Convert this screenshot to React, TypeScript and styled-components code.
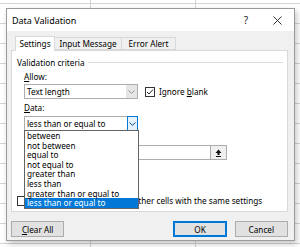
import React from "react";
import styled, { createGlobalStyle } from "styled-components";

const Global = createGlobalStyle`
  html, body { margin: 0; padding: 0; }
  body { width: 300px; height: 247px; overflow: hidden; }
`;

const FONT = `"Noto Sans", "Open Sans", sans-serif`;

const Desktop = styled.div`
  width: 300px;
  height: 247px;
  box-sizing: border-box;
  padding: 8px 0 0 6px;
  background-color: #ffffff;
  background-image:
    linear-gradient(to right, #d4d4d4 1px, transparent 1px),
    linear-gradient(to bottom, #d4d4d4 1px, transparent 1px);
  background-size: 105px 100%, 100% 20px;
  background-position: 90px 0, 0 3px;
  font-family: ${FONT};
  font-size: 8.2px;
  color: #000;
`;

const Dialog = styled.div`
  width: 289px;
  height: 233px;
  box-sizing: border-box;
  border: 1px solid #9a9a9a;
  background: #f0f0f0;
  display: flex;
  flex-direction: column;
  box-shadow: 2px 3px 6px rgba(0, 0, 0, 0.22);
`;

const TitleBar = styled.div`
  height: 22px;
  background: #ffffff;
  display: flex;
  align-items: center;
  padding-left: 5px;
  flex: none;
`;

const Title = styled.div`
  font-size: 9px;
  flex: 1;
  padding-top: 1px;
`;

const TitleButton = styled.div<{ $w: number }>`
  width: ${(p) => p.$w}px;
  height: 22px;
  display: flex;
  align-items: center;
  justify-content: center;
  font-size: 10px;
  color: #222;
`;

const Body = styled.div`
  flex: 1;
  display: flex;
  flex-direction: column;
  padding: 5px 6px 0 4px;
`;

const TabRow = styled.div`
  display: flex;
  height: 14px;
  padding-left: 4px;
  align-items: flex-end;
  position: relative;
  z-index: 1;
`;

const Tab = styled.div<{ $active?: boolean; $w: number }>`
  width: ${(p) => p.$w}px;
  box-sizing: border-box;
  height: ${(p) => (p.$active ? 15 : 13)}px;
  margin-bottom: ${(p) => (p.$active ? -1 : 0)}px;
  border: 1px solid #d9d9d9;
  border-bottom: ${(p) => (p.$active ? "none" : "1px solid #d9d9d9")};
  background: ${(p) => (p.$active ? "#ffffff" : "#f0f0f0")};
  margin-left: ${(p) => (p.$active ? 0 : -1)}px;
  display: flex;
  align-items: center;
  justify-content: center;
  padding-bottom: ${(p) => (p.$active ? 1 : 0)}px;
`;

const Panel = styled.div`
  height: 162px;
  box-sizing: border-box;
  border: 1px solid #d9d9d9;
  background: #ffffff;
  position: relative;
  padding: 4px 0 0 5px;
  display: flex;
  flex-direction: column;
`;

const GroupHeader = styled.div`
  display: flex;
  align-items: center;
  height: 15px;
  padding-right: 4px;
  gap: 3px;
`;

const GroupLine = styled.div`
  flex: 1;
  height: 1px;
  background: #dcdcdc;
`;

const Label = styled.div<{ $top: number }>`
  margin-top: ${(p) => p.$top}px;
  padding-left: 7px;
  height: 11px;
  line-height: 11px;
`;

const FieldRow = styled.div<{ $top: number }>`
  display: flex;
  align-items: center;
  margin-top: ${(p) => p.$top}px;
  padding-left: 7px;
  gap: 7px;
`;

const Combo = styled.div`
  width: 114px;
  height: 15px;
  box-sizing: border-box;
  border: 1px solid #adadad;
  background: #fff;
  display: flex;
  align-items: center;
`;

const ComboText = styled.div`
  flex: 1;
  padding-left: 2px;
  white-space: nowrap;
`;

const ComboButton = styled.div<{ $hot?: boolean }>`
  width: 11px;
  height: ${(p) => (p.$hot ? 15 : 13)}px;
  box-sizing: border-box;
  margin-right: ${(p) => (p.$hot ? -1 : 0)}px;
  border: 1px solid ${(p) => (p.$hot ? "#0078d7" : "#e6e6e6")};
  background: ${(p) => (p.$hot ? "#e5f1fb" : "#e6e6e6")};
  display: flex;
  align-items: center;
  justify-content: center;
`;

const CheckLabel = styled.div`
  display: flex;
  align-items: center;
  gap: 4px;
  white-space: nowrap;
`;

const Box = styled.div`
  width: 10px;
  height: 10px;
  box-sizing: border-box;
  border: 1px solid #333;
  background: #fff;
  display: flex;
  align-items: center;
  justify-content: center;
  flex: none;
`;

const InputRow = styled.div`
  display: flex;
  margin-top: 14px;
  margin-left: 7px;
  width: 203px;
  height: 15px;
  box-sizing: border-box;
  border: 1px solid #adadad;
  background: #fff;
`;

const InputArea = styled.div`
  flex: 1;
`;

const RangeButton = styled.div`
  width: 15px;
  border-left: 1px solid #adadad;
  background: #f0f0f0;
  display: flex;
  align-items: center;
  justify-content: center;
`;

const ApplyRow = styled.div`
  display: flex;
  align-items: center;
  gap: 4px;
  margin-top: 35px;
  white-space: nowrap;
`;

const DropList = styled.div`
  position: absolute;
  left: 12px;
  top: 79px;
  width: 115px;
  box-sizing: border-box;
  border: 1px solid #646464;
  background: #fff;
  z-index: 2;
`;

const Item = styled.div<{ $sel?: boolean }>`
  height: 9.6px;
  line-height: 9.6px;
  padding-left: 2px;
  white-space: nowrap;
  background: ${(p) => (p.$sel ? "#0078d7" : "transparent")};
  color: ${(p) => (p.$sel ? "#fff" : "#000")};
`;

const Footer = styled.div`
  display: flex;
  align-items: center;
  height: 22px;
  margin-top: 6px;
`;

const Button = styled.div<{ $default?: boolean; $ml?: number }>`
  width: 54px;
  height: 16px;
  box-sizing: border-box;
  margin-left: ${(p) => p.$ml ?? 0}px;
  border: ${(p) => (p.$default ? "2px solid #0078d7" : "1px solid #adadad")};
  background: #e1e1e1;
  display: flex;
  align-items: center;
  justify-content: center;
`;

const Chevron = ({ color = "#333" }: { color?: string }) => (
  <svg width="7" height="4" viewBox="0 0 7 4">
    <path d="M0.5 0.5 L3.5 3.3 L6.5 0.5" stroke={color} strokeWidth="1" fill="none" />
  </svg>
);

const items = [
  "between",
  "not between",
  "equal to",
  "not equal to",
  "greater than",
  "less than",
  "greater than or equal to",
  "less than or equal to",
];

export default function App() {
  return (
    <>
      <Global />
      <Desktop>
        <Dialog>
          <TitleBar>
            <Title>Data Validation</Title>
            <TitleButton $w={28}>?</TitleButton>
            <TitleButton $w={34}>
              <svg width="9" height="9" viewBox="0 0 9 9">
                <path d="M0.5 0.5 L8.5 8.5 M8.5 0.5 L0.5 8.5" stroke="#333" strokeWidth="1" />
              </svg>
            </TitleButton>
          </TitleBar>
          <Body>
            <TabRow>
              <Tab $active $w={40}>Settings</Tab>
              <Tab $w={68}>Input Message</Tab>
              <Tab $w={55}>Error Alert</Tab>
            </TabRow>
            <Panel>
              <GroupHeader>
                <span>Validation criteria</span>
                <GroupLine />
              </GroupHeader>
              <Label $top={1}>
                <u>A</u>llow:
              </Label>
              <FieldRow $top={2}>
                <Combo>
                  <ComboText>Text length</ComboText>
                  <ComboButton>
                    <Chevron color="#999" />
                  </ComboButton>
                </Combo>
                <CheckLabel>
                  <Box>
                    <svg width="8" height="8" viewBox="0 0 8 8">
                      <path d="M1 4 L3 6 L7 1.5" stroke="#222" strokeWidth="1" fill="none" />
                    </svg>
                  </Box>
                  <span>
                    Ignore <u>b</u>lank
                  </span>
                </CheckLabel>
              </FieldRow>
              <Label $top={3}>
                <u>D</u>ata:
              </Label>
              <FieldRow $top={3}>
                <Combo>
                  <ComboText>less than or equal to</ComboText>
                  <ComboButton $hot>
                    <Chevron color="#0b4a8b" />
                  </ComboButton>
                </Combo>
              </FieldRow>
              <InputRow>
                <InputArea />
                <RangeButton>
                  <svg width="7" height="8" viewBox="0 0 7 8">
                    <path d="M3.5 0.5 L6.5 4 L4.5 4 L4.5 6 L2.5 6 L2.5 4 L0.5 4 Z" fill="#111" />
                    <rect x="1" y="7" width="5" height="1" fill="#111" />
                  </svg>
                </RangeButton>
              </InputRow>
              <ApplyRow>
                <Box />
                <span>Apply these changes to all other cells with the same settings</span>
              </ApplyRow>
              <DropList>
                {items.map((t) => (
                  <Item key={t} $sel={t === "less than or equal to"}>
                    {t}
                  </Item>
                ))}
              </DropList>
            </Panel>
            <Footer>
              <Button>
                <span>
                  <u>C</u>lear All
                </span>
              </Button>
              <Button $default $ml={109}>
                OK
              </Button>
              <Button $ml={8}>Cancel</Button>
            </Footer>
          </Body>
        </Dialog>
      </Desktop>
    </>
  );
}
